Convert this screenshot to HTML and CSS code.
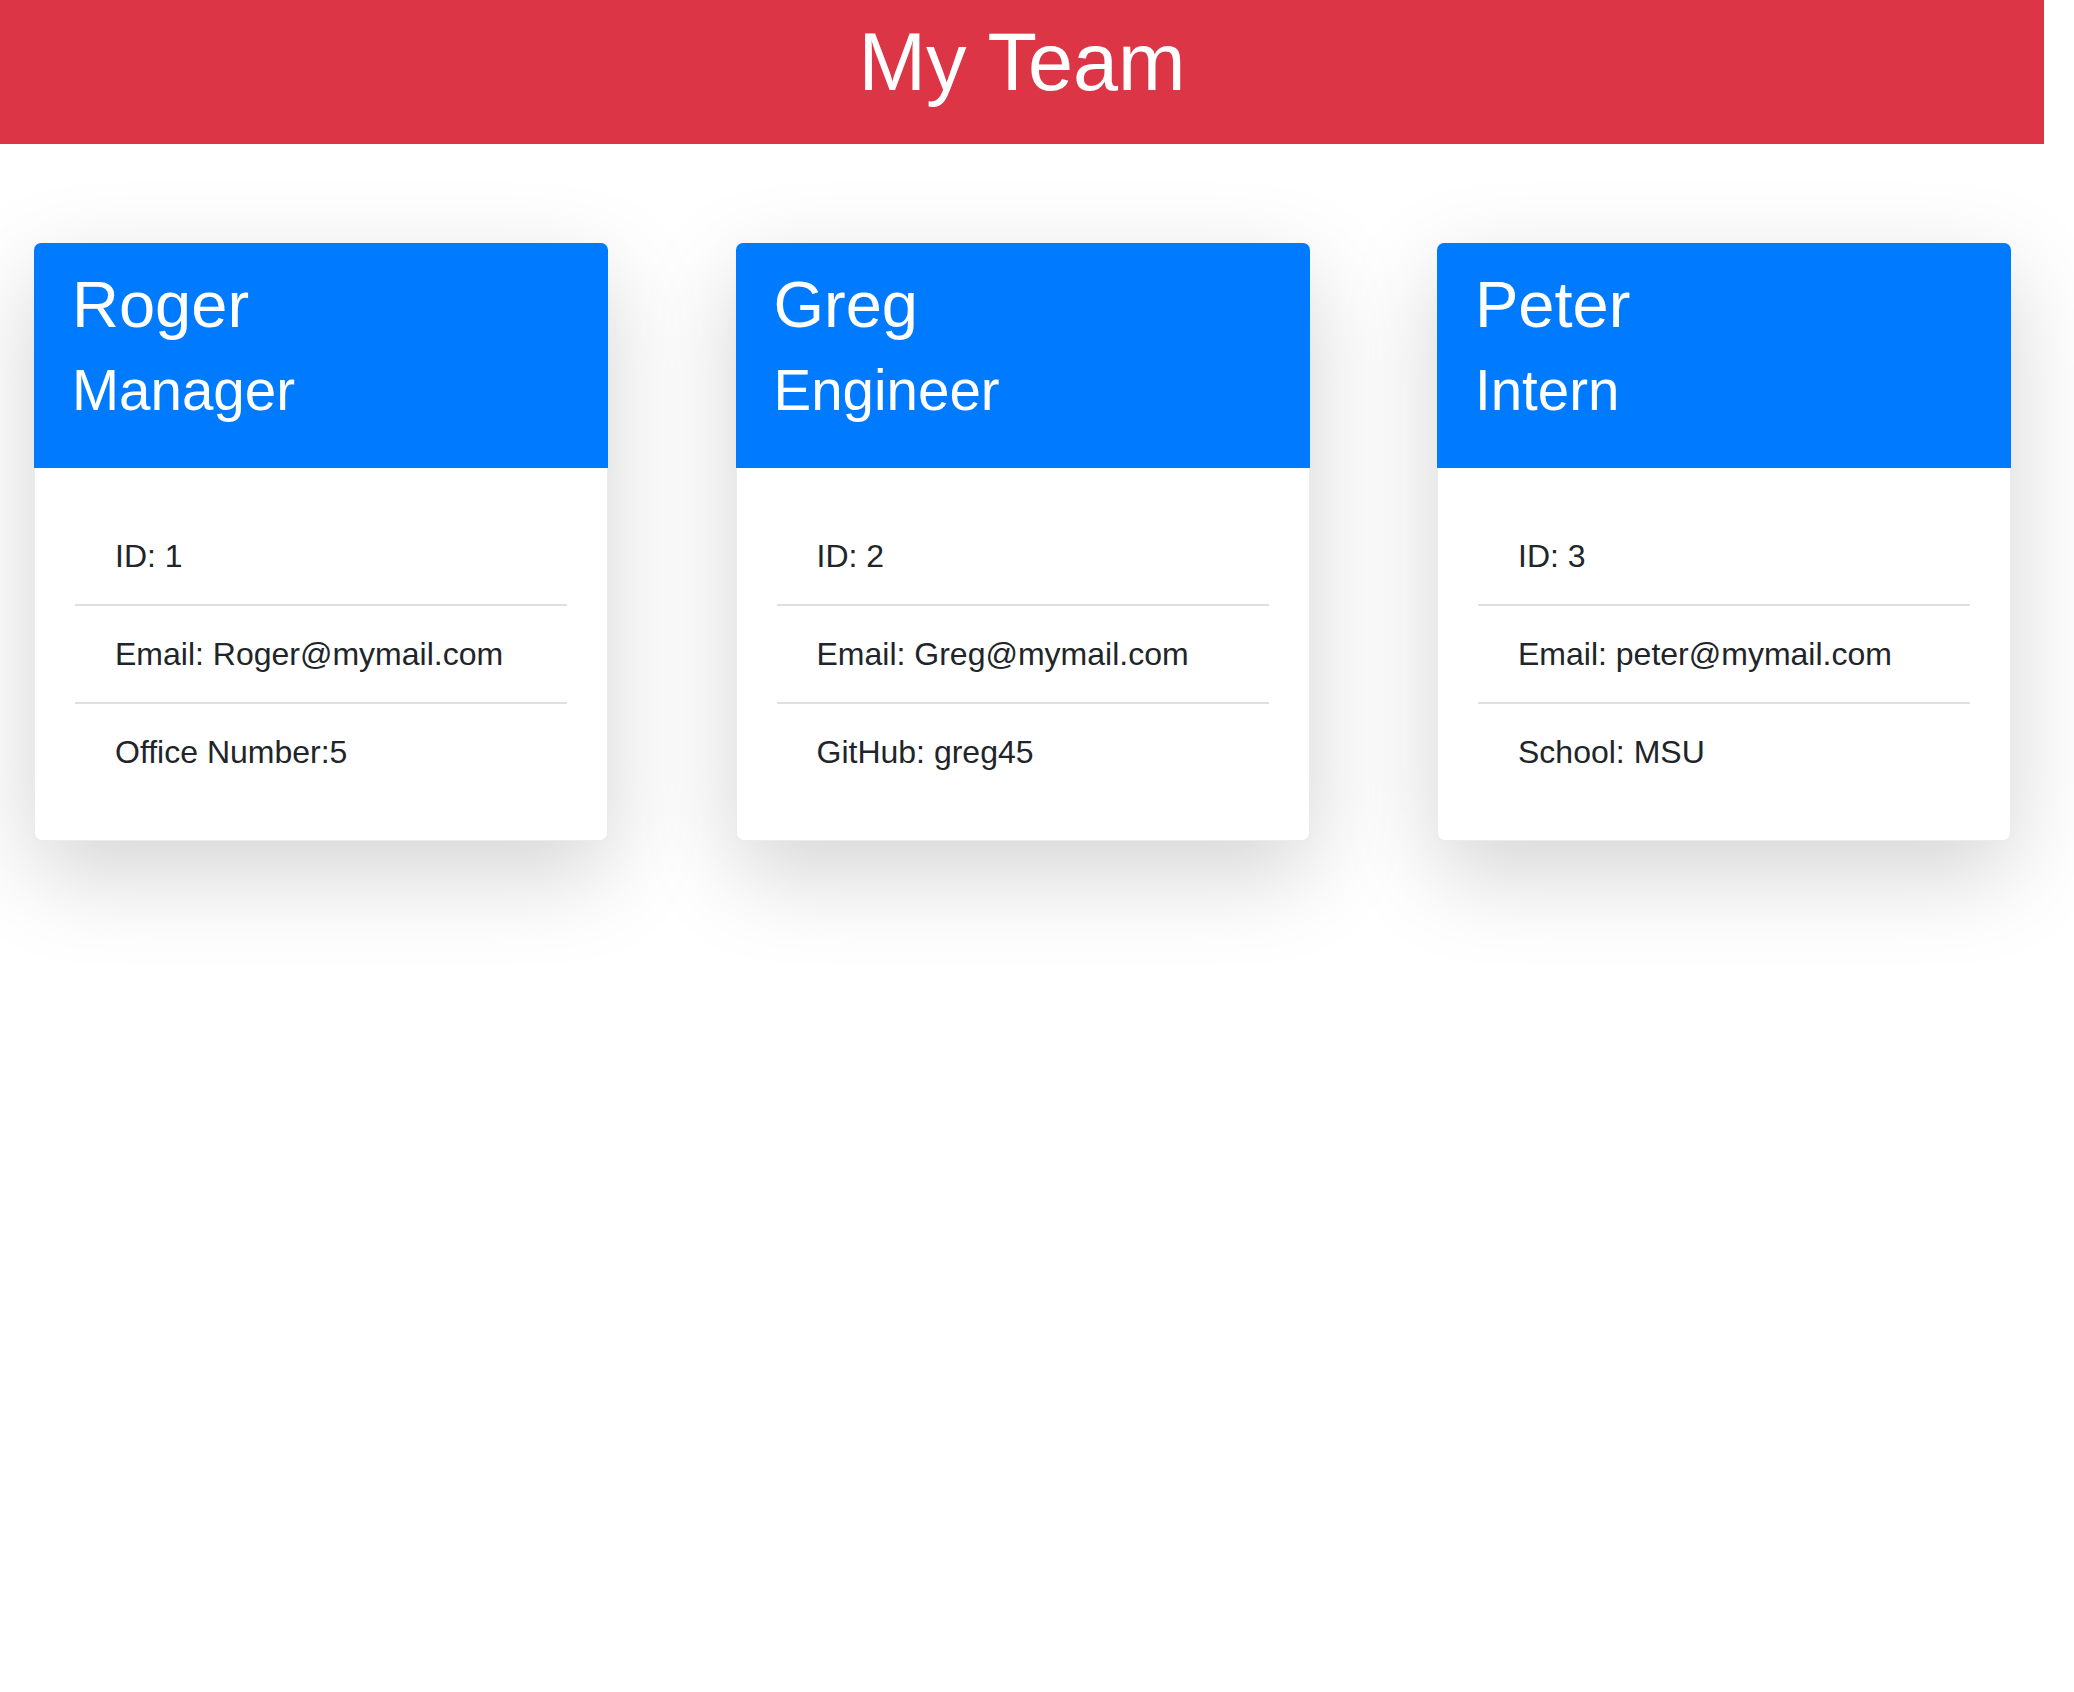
FILE: index.html
```html
<!DOCTYPE html>
<html>
  <head>
    <meta http-equiv="Content-Type" content="text/html; charset=UTF-8">
    <title>My Team</title>
    <link rel="stylesheet" href="styles.css">
  </head>

  <body>
    <div class="pagina">

      <header class="cabecera">
        <h1>My Team</h1>
      </header>

      <main class="equipo">

        <div class="tarjeta">
          <div class="tarjeta-cab">
            <h2>Roger</h2>
            <h3>Manager</h3>
          </div>
          <div class="tarjeta-cuerpo">
            <ul class="datos">
              <li>ID: 1</li>
              <li>Email: Roger@mymail.com</li>
              <li>Office Number:5</li>
            </ul>
          </div>
        </div>

        <div class="tarjeta">
          <div class="tarjeta-cab">
            <h2>Greg</h2>
            <h3>Engineer</h3>
          </div>
          <div class="tarjeta-cuerpo">
            <ul class="datos">
              <li>ID: 2</li>
              <li>Email: Greg@mymail.com</li>
              <li>GitHub: greg45</li>
            </ul>
          </div>
        </div>

        <div class="tarjeta">
          <div class="tarjeta-cab">
            <h2>Peter</h2>
            <h3>Intern</h3>
          </div>
          <div class="tarjeta-cuerpo">
            <ul class="datos">
              <li>ID: 3</li>
              <li>Email: peter@mymail.com</li>
              <li>School: MSU</li>
            </ul>
          </div>
        </div>

      </main>

    </div>
  </body>
</html>
```

FILE: styles.css
```css
body {
  margin: 0;
  font-family: "Liberation Sans", Arial, sans-serif;
  font-size: 32px;
  color: #212529;
  background: #fff;
}

.pagina {
  width: 2044px;
  min-height: 100vh;
}

.cabecera {
  background-color: #dc3545;
  color: #fff;
  text-align: center;
  height: 144px;
  padding-top: 14px;
  box-sizing: border-box;
}

.cabecera h1 {
  margin: 0;
  font-size: 81px;
  font-weight: 400;
  line-height: 1.2;
}

.equipo {
  display: flex;
  justify-content: space-between;
  align-items: flex-start;
  margin-top: 99px;
  padding: 0 33px 0 34px;
}

.tarjeta {
  flex: 0 0 574px;
  background: #fff;
  border: 1px solid rgba(0, 0, 0, 0.08);
  border-radius: 8px;
  box-shadow: 0 32px 96px rgba(0, 0, 0, 0.175);
  box-sizing: border-box;
}

.tarjeta-cab {
  background-color: #007bff;
  color: #fff;
  padding: 23px 38px 24px;
  border-radius: 7px 7px 0 0;
  margin: -1px -1px 0;
}

.tarjeta-cab h2 {
  margin: 0 0 13px;
  font-size: 65px;
  font-weight: 400;
  line-height: 1.2;
}

.tarjeta-cab h3 {
  margin: 0 0 19px;
  font-size: 56.5px;
  font-weight: 400;
  line-height: 1.2;
}

.tarjeta-cuerpo {
  padding: 40px;
}

.datos {
  list-style: none;
  margin: 0;
  padding: 0;
}

.datos li {
  padding: 24px 40px;
  line-height: 48px;
  border-bottom: 2px solid #dfdfdf;
}

.datos li:last-child {
  border-bottom: 0;
}
```
